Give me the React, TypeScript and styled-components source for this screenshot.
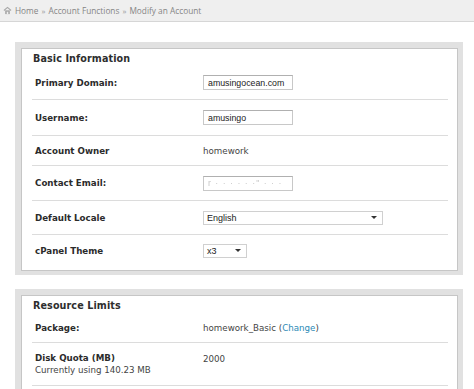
import styled, { createGlobalStyle } from "styled-components";

const Global = createGlobalStyle`
  body {
    margin: 0;
    background: #ffffff;
    font-family: "DejaVu Sans", Verdana, sans-serif;
    color: #333;
  }
`;

const Breadcrumb = styled.div`
  height: 21px;
  display: flex;
  align-items: center;
  gap: 3px;
  padding-left: 3px;
  background: #efefef;
  border-bottom: 1px solid #d6d6d6;
  font-family: "Open Sans", sans-serif;
  font-size: 8.3px;
  color: #858585;
`;

const Sep = styled.span`
  font-size: 8px;
  color: #999;
`;

const Page = styled.div`
  padding: 20px 11px 0 15px;
  display: flex;
  flex-direction: column;
  gap: 14px;
`;

const Frame = styled.div`
  background: #e1e1e1;
  padding: 6px 5px 4px 6px;
`;

const Box = styled.div`
  background: #fff;
  border: 1px solid #c6c6c6;
  padding: 3px 9px 4px 10px;
`;

const Title = styled.h3`
  margin: 0;
  padding-left: 1px;
  font-size: 9.6px;
  line-height: 14px;
  font-weight: bold;
  color: #2e2e2e;
  letter-spacing: 0.1px;
`;

const Row = styled.div<{ $h: number; $last?: boolean }>`
  box-sizing: border-box;
  height: ${(p) => p.$h}px;
  display: flex;
  align-items: center;
  padding-left: 3px;
  border-bottom: ${(p) => (p.$last ? "none" : "1px solid #dcdcdc")};
  font-size: 8.7px;
`;

const Label = styled.div`
  width: 168px;
  font-weight: bold;
  color: #2b2b2b;
`;

const Sub = styled.div`
  font-weight: normal;
  color: #444;
  margin-top: 2px;
`;

const Value = styled.div`
  color: #444;
  align-self: center;
`;

const TopValue = styled(Value)`
  align-self: flex-start;
  padding-top: 11px;
`;

const Input = styled.div<{ $w: number }>`
  width: ${(p) => p.$w}px;
  height: 15px;
  box-sizing: border-box;
  border: 1px solid #c8c8c8;
  border-top-color: #b0b0b0;
  padding-left: 4px;
  display: flex;
  align-items: center;
  font-family: "Liberation Sans", Arial, sans-serif;
  font-size: 8.8px;
  color: #222;
  background: #fff;
`;

const Blurred = styled.span`
  color: #c8c8c8;
  letter-spacing: 1px;
  filter: blur(0.6px);
`;

const Select = styled.div<{ $w: number }>`
  width: ${(p) => p.$w}px;
  height: 14px;
  box-sizing: border-box;
  border: 1px solid #d0d0d0;
  padding: 0 5px 0 3px;
  display: flex;
  align-items: center;
  justify-content: space-between;
  font-family: "Liberation Sans", Arial, sans-serif;
  font-size: 9px;
  color: #222;
  background: #fff;
`;

const Caret = styled.span`
  width: 0;
  height: 0;
  border-left: 3px solid transparent;
  border-right: 3px solid transparent;
  border-top: 3px solid #333;
`;

const Link = styled.span`
  color: #2b8ab6;
`;

const Home = () => (
  <svg width="9" height="9" viewBox="0 0 10 10">
    <path d="M1 5 L5 1.5 L9 5" fill="none" stroke="#a8a8a8" strokeWidth="1.2" />
    <rect x="2.4" y="4.8" width="5.2" height="4.2" fill="#a8a8a8" />
    <rect x="4.2" y="6.4" width="1.6" height="2.6" fill="#efefef" />
  </svg>
);

export default function App() {
  return (
    <>
      <Global />
      <Breadcrumb>
        <Home />
        <span>Home</span>
        <Sep>»</Sep>
        <span>Account Functions</span>
        <Sep>»</Sep>
        <span>Modify an Account</span>
      </Breadcrumb>
      <Page>
        <Frame>
          <Box>
            <Title>Basic Information</Title>
            <Row $h={34}>
              <Label>Primary Domain:</Label>
              <Input $w={90}>amusingocean.com</Input>
            </Row>
            <Row $h={36}>
              <Label>Username:</Label>
              <Input $w={90}>amusingo</Input>
            </Row>
            <Row $h={30}>
              <Label>Account Owner</Label>
              <Value>homework</Value>
            </Row>
            <Row $h={35}>
              <Label>Contact Email:</Label>
              <Input $w={90}>
                <Blurred>r · · · · · ·" · · ·</Blurred>
              </Input>
            </Row>
            <Row $h={34}>
              <Label>Default Locale</Label>
              <Select $w={180}>
                English
                <Caret />
              </Select>
            </Row>
            <Row $h={31} $last>
              <Label>cPanel Theme</Label>
              <Select $w={44}>
                x3
                <Caret />
              </Select>
            </Row>
          </Box>
        </Frame>
        <Frame>
          <Box>
            <Title>Resource Limits</Title>
            <Row $h={30}>
              <Label>Package:</Label>
              <Value>
                homework_Basic (<Link>Change</Link>)
              </Value>
            </Row>
            <Row $h={43}>
              <Label>
                Disk Quota (MB)
                <Sub>Currently using 140.23 MB</Sub>
              </Label>
              <TopValue>2000</TopValue>
            </Row>
          </Box>
        </Frame>
      </Page>
    </>
  );
}
